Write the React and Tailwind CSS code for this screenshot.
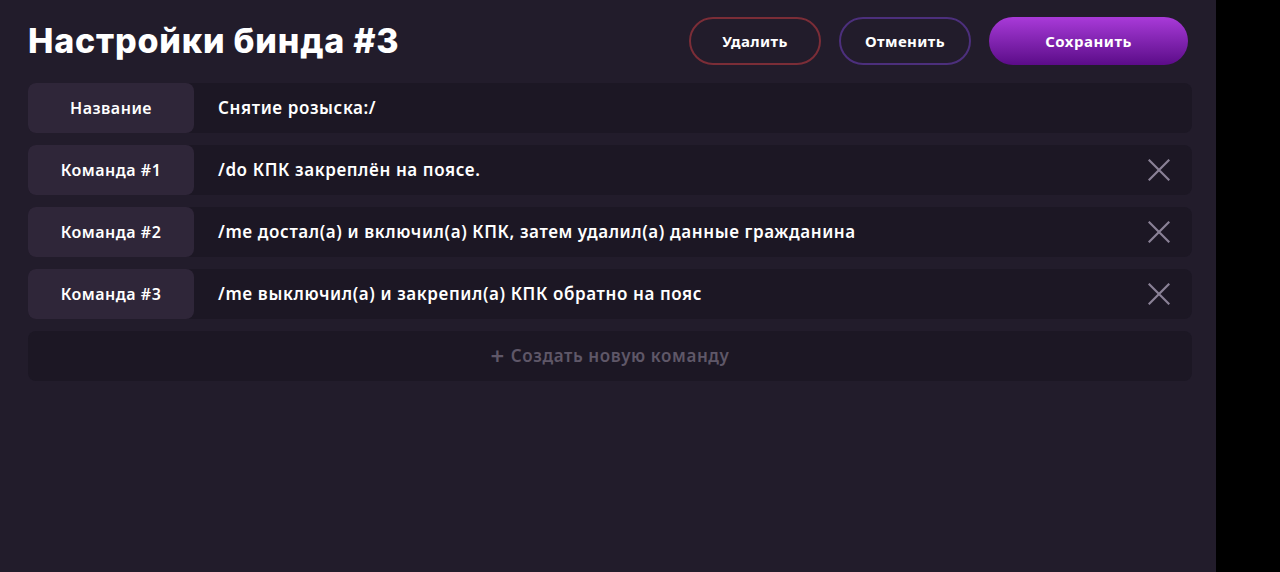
import React from 'react';

const rows = [
    { label: 'Название', value: 'Снятие розыска:/', removable: false },
    { label: 'Команда #1', value: '/do КПК закреплён на поясе.', removable: true },
    { label: 'Команда #2', value: '/me достал(а) и включил(а) КПК, затем удалил(а) данные гражданина', removable: true },
    { label: 'Команда #3', value: '/me выключил(а) и закрепил(а) КПК обратно на пояс', removable: true },
];

const CloseIcon = () => (
    <svg width="22" height="22" viewBox="0 0 22 22" fill="none" stroke="#8a8196" strokeWidth="2.2" strokeLinecap="square">
        <path d="M1.5 1.5L20.5 20.5M20.5 1.5L1.5 20.5" />
    </svg>
);

const App = () => {
    return (
        <div className="flex h-[572px] w-[1280px] bg-black" style={{ fontFamily: '"Noto Sans", "Open Sans", sans-serif' }}>
            <div className="w-[1216px] bg-[#221c2b] pl-[28px] pr-[24px] pt-[17px]">
                {/* Header */}
                <div className="flex items-center justify-between pr-[4px]">
                    <h1 className="text-[34px] font-extrabold leading-none tracking-[0.8px] text-white" style={{ fontFamily: 'Inter, sans-serif' }}>
                        Настройки бинда #3
                    </h1>
                    <div className="flex gap-[18px]">
                        <button className="h-[48px] w-[132px] rounded-full border-2 border-[#7b2d37] text-[15px] font-bold tracking-[0.4px] text-white">
                            Удалить
                        </button>
                        <button className="h-[48px] w-[132px] rounded-full border-2 border-[#4c2f7c] text-[15px] font-bold tracking-[0.4px] text-white">
                            Отменить
                        </button>
                        <button className="h-[48px] w-[199px] rounded-full bg-gradient-to-b from-[#a93ad9] to-[#5c0b89] text-[15px] font-bold tracking-[0.5px] text-white">
                            Сохранить
                        </button>
                    </div>
                </div>

                {/* Rows */}
                <div className="mt-[18px] flex flex-col gap-[12px]">
                    {rows.map((row) => (
                        <div key={row.label} className="flex h-[50px] items-center rounded-[8px] bg-[#1c1724]">
                            <div className="flex h-full w-[166px] items-center justify-center rounded-[8px] bg-[#2f2639] text-[16px] font-semibold tracking-[0.5px] text-white">
                                {row.label}
                            </div>
                            <div className="flex-1 pl-[24px] text-[17px] font-semibold tracking-[0.6px] text-white">
                                {row.value}
                            </div>
                            {row.removable && (
                                <button className="mr-[22px] flex items-center">
                                    <CloseIcon />
                                </button>
                            )}
                        </div>
                    ))}
                    <button className="flex h-[50px] items-center justify-center gap-[6px] rounded-[8px] bg-[#1c1724] text-[17px] font-semibold tracking-[0.6px] text-[#5f5768]">
                        <span className="text-[24px] font-semibold leading-none">+</span>
                        Создать новую команду
                    </button>
                </div>
            </div>
        </div>
    );
};

export default App;
